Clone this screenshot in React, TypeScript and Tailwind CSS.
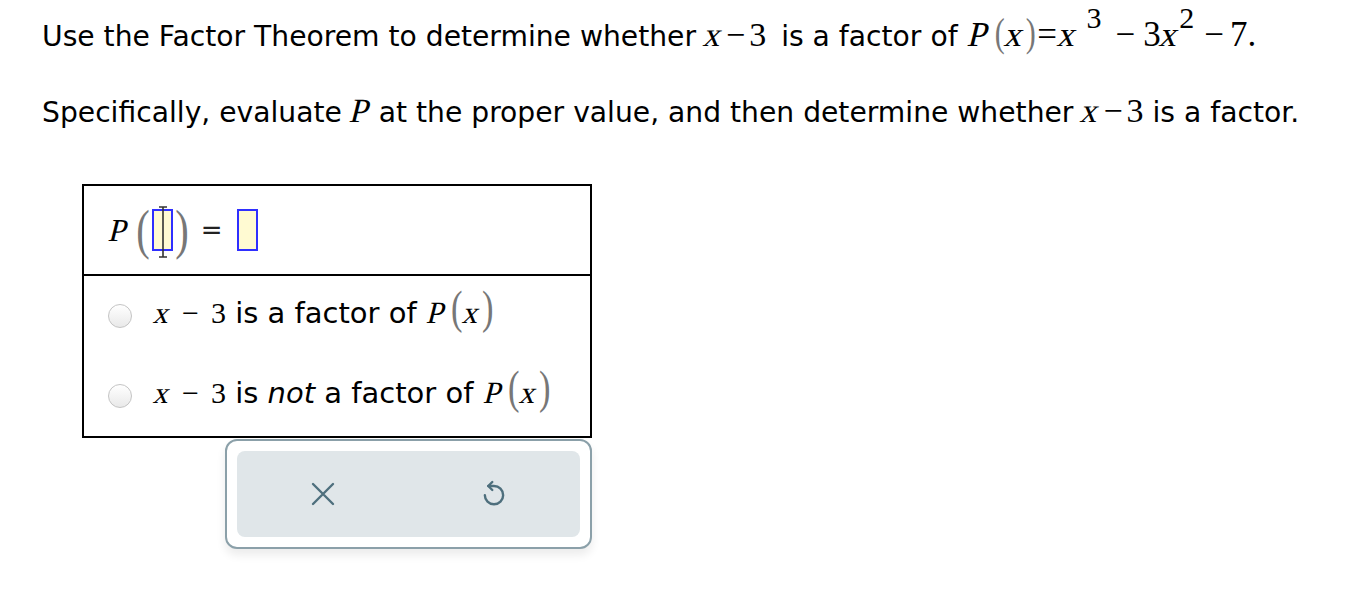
import React from "react";

const SANS = "font-['DejaVu_Sans',Verdana,sans-serif]";
const SERIF = "font-['Liberation_Serif',serif]";

// the serif fonts here ship without an italic face, so slant the math letters by hand
const It = ({ children, className = "" }: { children: React.ReactNode; className?: string }) => (
  <span className={`inline-block -skew-x-[14deg] ${className}`}>{children}</span>
);

const Paren = ({ ch, size }: { ch: string; size: string }) => (
  <span className={`${SERIF} ${size} text-[#777] leading-none inline-block scale-x-75`}>{ch}</span>
);

const AnswerBox = ({ cursor }: { cursor?: boolean }) => (
  <span className="relative inline-block w-[21px] h-[42px] border-2 border-[#2f2fff] bg-[#fffad2] align-middle">
    {cursor && (
      <svg className="absolute left-[1px] -top-[5px]" width="16" height="52" viewBox="0 0 16 52">
        <path d="M4 1h8M8 1v50M4 51h8" stroke="#333" strokeWidth="1.6" fill="none" />
      </svg>
    )}
  </span>
);

const Radio = () => (
  <span className="inline-block w-[24px] h-[24px] rounded-full border border-[#c4c4c4] bg-gradient-to-b from-white to-[#e9e9e9] shrink-0" />
);

const Option = ({ not }: { not?: boolean }) => (
  <div className="flex items-center h-[80px] pl-[24px]">
    <Radio />
    <div className="flex items-baseline ml-[23px] text-[29px] -mt-[10px] whitespace-pre">
      <span className={`${SERIF} text-[30px]`}>
        <It>x</It>
        <span className="mx-[12px]">−</span>3
      </span>
      <span> is {not ? <span className="italic">not</span> : null}{not ? " " : ""}a factor of </span>
      <span className={`${SERIF} text-[31px] ml-[2px]`}>
        <It>P</It>
        <span className="ml-[4px]"><Paren ch="(" size="text-[46px]" /></span>
        <It>x</It>
        <Paren ch=")" size="text-[46px]" />
      </span>
    </div>
  </div>
);

const UndoIcon = () => (
  <svg width="28" height="32" viewBox="0 0 24 28" fill="none" stroke="#4e6f7d" strokeWidth="2.1" strokeLinecap="round" strokeLinejoin="round">
    <path d="M10.5 3.5L7 7l3.5 3.5" />
    <path d="M7 7h5a8 8 0 1 1-8 8" />
  </svg>
);

const XIcon = () => (
  <svg width="24" height="24" viewBox="0 0 24 24" fill="none" stroke="#4e6f7d" strokeWidth="2.4" strokeLinecap="round">
    <path d="M2 2l20 20M22 2L2 22" />
  </svg>
);

export default function App() {
  return (
    <div className={`${SANS} bg-white text-black min-h-[600px] w-[1362px] pl-[42px]`}>
      <div className="flex h-[70px] items-center">
        <div className="flex items-baseline text-[28.2px] whitespace-pre">
          <span>Use the Factor Theorem to determine whether </span>
          <span className={`${SERIF} text-[34px]`}>
            <It>x</It>
            <span className="mx-[4px]">−</span>3
          </span>
          <span className="ml-[6px]"> is a factor of </span>
          <span className={`${SERIF} text-[35px] ml-[2px]`}>
            <It>P</It>
            <span className="ml-[5px]"><Paren ch="(" size="text-[40px]" /></span>
            <It>x</It>
            <Paren ch=")" size="text-[40px]" />
            <span>=</span>
            <It className="ml-[2px]">x</It>
            <span className="relative -top-[18px] text-[30px] ml-[10px]">3</span>
            <span className="ml-[14px] mr-[8px]">−</span>3<It>x</It>
            <span className="relative -top-[18px] text-[30px] ml-[1px]">2</span>
            <span className="ml-[10px] mr-[6px]">−</span>7.
          </span>
        </div>
      </div>
      <div className="flex h-[80px] items-center">
        <div className="flex items-baseline text-[28.2px] whitespace-pre">
          <span>Specifically, evaluate </span>
          <span className={`${SERIF} text-[34px]`}><It>P</It></span>
          <span> at the proper value, and then determine whether </span>
          <span className={`${SERIF} text-[34px]`}>
            <It>x</It>
            <span className="mx-[4px]">−</span>3
          </span>
          <span> is a factor.</span>
        </div>
      </div>

      <div className="ml-[40px] mt-[34px] w-[510px] border-2 border-black">
        <div className="flex items-center h-[90px] pl-[26px] border-b-2 border-black">
          <span className={`${SERIF} text-[32px] mr-[6px]`}><It>P</It></span>
          <span className="flex items-center">
            <Paren ch="(" size="text-[54px]" />
            <AnswerBox cursor />
            <Paren ch=")" size="text-[54px]" />
          </span>
          <span className="text-[26px] ml-[10px] mr-[14px] text-[#222]">=</span>
          <AnswerBox />
        </div>
        <div>
          <Option />
          <Option not />
        </div>
      </div>

      <div className="ml-[183px] mt-[1px] w-[367px] h-[110px] rounded-[12px] border-2 border-[#8ba0a9] bg-white p-[10px] shadow-[0_6px_10px_rgba(0,0,0,0.08)]">
        <div className="grid grid-cols-2 h-full rounded-[8px] bg-[#e0e6e9]">
          <div className="flex items-center justify-center">
            <XIcon />
          </div>
          <div className="flex items-center justify-center">
            <UndoIcon />
          </div>
        </div>
      </div>
    </div>
  );
}
